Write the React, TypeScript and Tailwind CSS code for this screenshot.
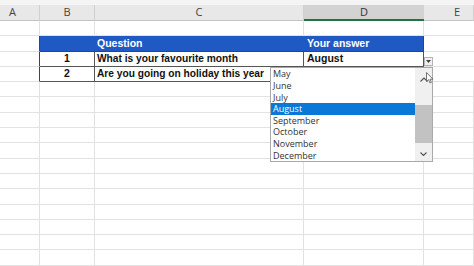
import React from 'react';

const COLS = [
  { key: 'A', w: 'w-[40px]', label: 'pl-[9px] justify-start' },
  { key: 'B', w: 'w-[55px]', label: 'justify-center' },
  { key: 'C', w: 'w-[209px]', label: 'justify-center' },
  { key: 'D', w: 'w-[120px]', label: 'justify-center' },
  { key: 'E', w: 'w-[50px]', label: 'pl-[30px] justify-start' },
];

const MONTHS = ['May', 'June', 'July', 'August', 'September', 'October', 'November', 'December'];

const cellFont = { fontFamily: '"Liberation Sans", Arial, sans-serif' };
const uiFont = { fontFamily: '"Open Sans", "Noto Sans", sans-serif' };

function BlankRow() {
  return (
    <div className="flex h-[15.3px]">
      {COLS.map((c) => (
        <div key={c.key} className={`${c.w} shrink-0 border-r border-b border-[#e2e2e2]`} />
      ))}
    </div>
  );
}

export default function App() {
  return (
    <div className="relative h-[266px] w-[474px] overflow-hidden bg-white" style={cellFont}>
      {/* strip above column headers */}
      <div className="h-[5px] bg-[#f4f4f4]" />

      {/* column headers */}
      <div className="flex h-[16px] text-[11px] text-[#444]" style={uiFont}>
        {COLS.map((c) => (
          <div
            key={c.key}
            className={`${c.w} flex shrink-0 items-center ${c.label} ${
              c.key === 'D'
                ? 'border-b-2 border-[#217346] bg-[#d3d3d3] text-[#333]'
                : 'border-r border-b border-r-[#d0d0d0] border-b-[#c4c4c4] bg-[#e8e8e8]'
            }`}
          >
            {c.key}
          </div>
        ))}
      </div>

      {/* row above table */}
      <div className="flex h-[15.3px]">
        <div className="w-[40px] shrink-0 border-r border-b border-[#e2e2e2]" />
        <div className="w-[55px] shrink-0 border-r border-b border-[#e2e2e2]" />
        <div className="w-[209px] shrink-0 border-r border-b border-[#e2e2e2]" />
        <div className="w-[120px] shrink-0 border-r border-b border-[#e2e2e2]" />
        <div className="w-[50px] shrink-0 border-b border-[#e2e2e2]" />
      </div>

      {/* table header */}
      <div className="flex h-[15.3px] text-[10.5px] font-bold text-white">
        <div className="w-[40px] shrink-0 border-r border-b border-r-[#444] border-b-[#e2e2e2]" />
        <div className="w-[55px] shrink-0 border-b border-[#444] bg-[#1f5ac4]" />
        <div className="flex w-[209px] shrink-0 items-center border-b border-[#444] bg-[#1f5ac4] pl-[2px]">
          Question
        </div>
        <div className="flex w-[120px] shrink-0 items-center border-r border-b border-[#444] bg-[#1f5ac4] pl-[3px]">
          Your answer
        </div>
        <div className="w-[50px] shrink-0 border-b border-[#e2e2e2]" />
      </div>

      {/* data rows */}
      {[
        { n: '1', q: 'What is your favourite month', a: 'August' },
        { n: '2', q: 'Are you going on holiday this year', a: '' },
      ].map((r) => (
        <div key={r.n} className="flex h-[15.3px] text-[10.2px] font-bold text-[#111]">
          <div className="w-[40px] shrink-0 border-r border-b border-r-[#444] border-b-[#e2e2e2]" />
          <div className="flex w-[55px] shrink-0 items-center justify-center border-r border-b border-[#555] text-[10.5px]">
            {r.n}
          </div>
          <div className="flex w-[209px] shrink-0 items-center border-r border-b border-[#555] pl-[2px]">
            {r.q}
          </div>
          <div className="flex w-[120px] shrink-0 items-center border-r border-b border-[#555] pl-[3px] text-[10.5px]">
            {r.a}
          </div>
          <div className="w-[50px] shrink-0 border-b border-[#e2e2e2]" />
        </div>
      ))}

      {Array.from({ length: 12 }).map((_, i) => (
        <BlankRow key={i} />
      ))}

      {/* dropdown button on D row 1 */}
      <div className="absolute top-[57px] left-[424px] flex h-[9px] w-[9px] items-center justify-center border border-[#b5b5b5] bg-[#f0f0f0]">
        <svg width="5" height="3" viewBox="0 0 5 3">
          <path d="M0 0 L5 0 L2.5 3 Z" fill="#444" />
        </svg>
      </div>

      {/* dropdown list */}
      <div
        className="absolute top-[67px] left-[270px] flex h-[95px] w-[163px] border border-[#a9a9a9] bg-white"
        style={uiFont}
      >
        <div className="flex flex-1 flex-col text-[9px] leading-none text-[#333]">
          {MONTHS.map((m) => (
            <div
              key={m}
              className={`flex h-[11.7px] items-center pl-[2px] ${m === 'August' ? 'bg-[#0a78d7] text-white' : ''}`}
            >
              {m}
            </div>
          ))}
        </div>
        <div className="flex w-[17px] flex-col bg-[#f0f0f0]">
          <div className="flex h-[20px] items-center justify-center pt-[2px]">
            <svg width="8" height="5" viewBox="0 0 8 5">
              <path d="M0.5 4.5 L4 1 L7.5 4.5" fill="none" stroke="#555" strokeWidth="1.1" />
            </svg>
          </div>
          <div className="mt-[17px] h-[38px] bg-[#c2c2c2]" />
          <div className="flex-1" />
          <div className="flex h-[14px] items-center justify-center">
            <svg width="7" height="4" viewBox="0 0 7 4">
              <path d="M0.5 0.5 L3.5 3.5 L6.5 0.5" fill="none" stroke="#555" strokeWidth="1.1" />
            </svg>
          </div>
        </div>
      </div>

      {/* mouse pointer */}
      <svg className="absolute top-[72px] left-[426px]" width="8" height="12" viewBox="0 0 8 12">
        <path d="M0.5 0.5 L0.5 9.5 L2.6 7.6 L4 11 L5.4 10.4 L4 7.2 L7 7.2 Z" fill="#fff" stroke="#555" strokeWidth="0.8" />
      </svg>
    </div>
  );
}
